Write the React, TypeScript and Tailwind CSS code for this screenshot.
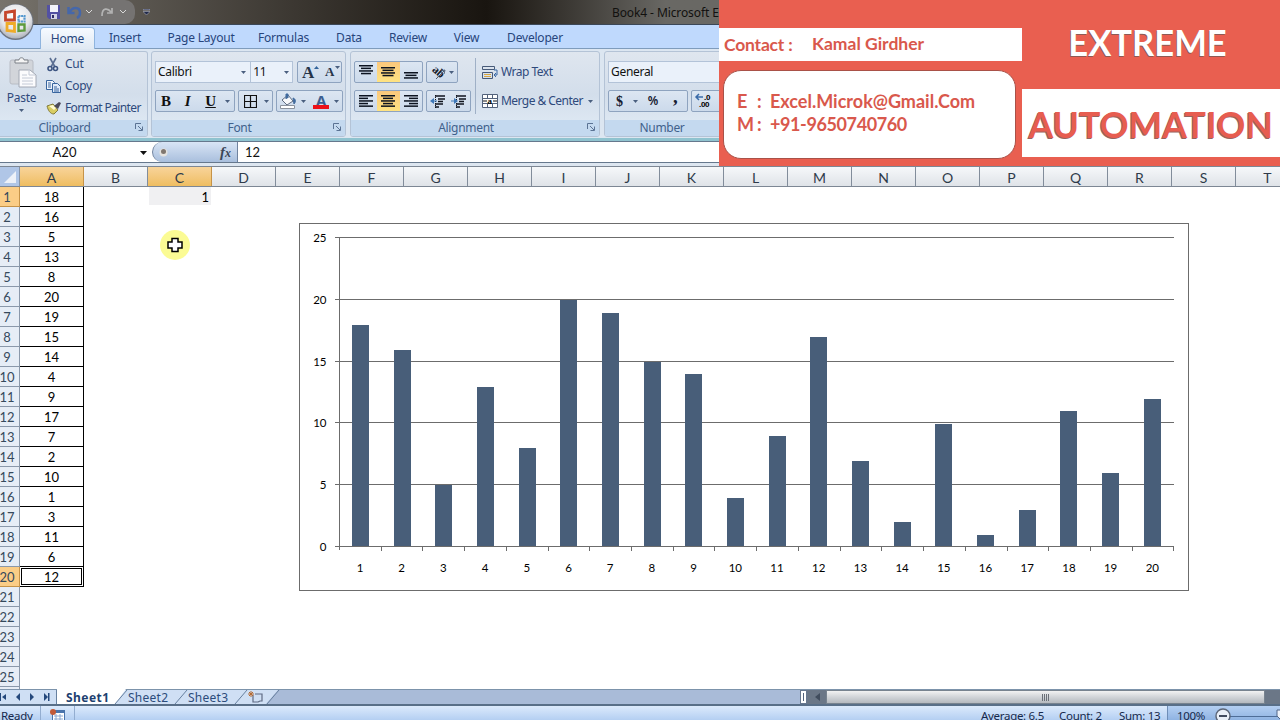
import React from "react";

const values = [18, 16, 5, 13, 8, 20, 19, 15, 14, 4, 9, 17, 7, 2, 10, 1, 3, 11, 6, 12];
const columns = "ABCDEFGHIJKLMNOPQRST".split("");

const Arrow = ({ className = "" }: { className?: string }) => (
  <svg width="5" height="3" viewBox="0 0 5 3" className={`shrink-0 ${className}`}>
    <path d="M0 0h5L2.5 3z" fill="#4a5f7f" />
  </svg>
);

const Launcher = () => (
  <svg width="8" height="8" viewBox="0 0 8 8" fill="none" stroke="#5b7394">
    <path d="M0.5 6V0.5H6M3 3l4 4M7.5 3.5v4h-4" />
  </svg>
);

const Lines = ({ widths, align = "center", className = "" }: { widths: number[]; align?: string; className?: string }) => (
  <svg width="14" height={widths.length * 2.6} className={className}>
    {widths.map((w, i) => (
      <rect
        key={i}
        x={align === "left" ? 0 : align === "right" ? 14 - w : (14 - w) / 2}
        y={i * 2.6}
        width={w}
        height="1.5"
        fill="#0c1320"
      />
    ))}
  </svg>
);

const Indent = ({ flip = false }: { flip?: boolean }) => (
  <svg width="16" height="13" viewBox="0 0 16 13">
    <path d="M5 1h10M8 4h7M8 6.500h5M5 9h8M5 12h4" stroke="#10151f" strokeWidth="1.600" />
    <path d="M5.500 0v13" stroke="#10151f" strokeDasharray="1 1" />
    <path d={flip ? "M0 5.500h3V3l4 3-4 3V6.500H0z" : "M7 5.500H4V3L0 6l4 3V6.500h3z"} fill="#3e78b8" />
  </svg>
);

const Group = ({ label, className, launcher = true, children }: { label: string; className: string; launcher?: boolean; children: React.ReactNode }) => (
  <section className={`flex shrink-0 flex-col overflow-hidden rounded-[3px] border border-[#b4c3d6] bg-linear-to-b from-[#dfe6ef] via-[#d3deeb] to-[#e2ecf6] ${className}`}>
    <div className="h-[68px] shrink-0">{children}</div>
    <div className="relative flex h-[16px] items-center justify-center bg-[#c4d9ef] pb-px pr-[18px] text-[12px] text-[#41618c]">
      {label}
      {launcher && (
        <span className="absolute right-[4px] top-[3px]">
          <Launcher />
        </span>
      )}
    </div>
  </section>
);

const box = "flex h-[22px] shrink-0 items-center rounded-[2px] border border-[#8ea3bf] bg-linear-to-b from-[#dce6f2] to-[#ccdaeb]";

const OfficeButton = () => (
  <svg width="38" height="44" viewBox="0 0 38 44" className="absolute left-[-3px] top-0">
    <defs>
      <radialGradient id="orb" cx="50%" cy="35%" r="65%">
        <stop offset="0" stopColor="#ffffff" />
        <stop offset="0.65" stopColor="#e4e5e9" />
        <stop offset="1" stopColor="#aeb2bb" />
      </radialGradient>
    </defs>
    <circle cx="18.500" cy="22" r="18" fill="#6d7480" />
    <circle cx="18.500" cy="21.500" r="17" fill="url(#orb)" />
    <g fill="none" strokeWidth="2.800">
      <path d="M8.500 20v-7.500l9-1.500v9z" stroke="#c5452b" />
      <path d="M21.500 16h6v5.500h-6z" stroke="#5598cf" strokeWidth="2.200" strokeDasharray="2 .6" />
      <path d="M10 23.500h7.500v8l-7.500-1z" stroke="#efab28" />
      <path d="M21.500 24.500h6v6l-6 .5z" stroke="#5e9b3d" strokeWidth="2.400" />
    </g>
  </svg>
);

const TitleBar = () => (
  <header className="flex h-[24px] shrink-0 items-center bg-linear-to-r from-[#77736c] from-0% via-[#191510] via-38% to-[#696864] to-52%">
    <div className="ml-[38px] flex h-full w-[97px] items-center rounded-r-[10px] bg-[#757372] pl-[9px]">
      <svg width="13" height="14" viewBox="0 0 13 14">
        <path d="M0 0h13v14H2l-2-2z" fill="#5351a3" />
        <path d="M3 0h8v7H3z" fill="#f2f3fa" />
        <path d="M4 9h6v5H4z" fill="#d3d4e5" />
        <path d="M5 10h2v3H5z" fill="#2e2c69" />
      </svg>
      <svg width="15" height="13" viewBox="0 0 15 13" className="ml-[7px]" fill="none" stroke="#4567aa" strokeWidth="2.500">
        <path d="M3 6c2-5 10-6 10 1 0 2-1 4-3 5" />
        <path d="M1.500 1v6h6" />
      </svg>
      <svg width="6" height="4" viewBox="0 0 6 4" className="ml-[4px]" fill="none" stroke="#d9d9d9"><path d="M0 0l3 3 3-3" /></svg>
      <svg width="12" height="11" viewBox="0 0 12 11" className="ml-[9px]" fill="none" stroke="#b3b3b3" strokeWidth="1.700">
        <path d="M1 9C1 0 7 1 10 5M11 1v5H6" />
      </svg>
      <svg width="6" height="4" viewBox="0 0 6 4" className="ml-[7px] shrink-0" fill="none" stroke="#d9d9d9"><path d="M0 0l3 3 3-3" /></svg>
    </div>
    <svg width="7" height="6" viewBox="0 0 7 6" className="ml-[8px]">
      <path d="M0 0h7v1H0zM0 2.500h7L3.500 6z" fill="#20294a" stroke="#c3c6d4" strokeWidth=".5" />
    </svg>
    <div className="ml-[462px] whitespace-nowrap pt-[2px] text-[12px] tracking-[-0.100px] text-[#12110f]">Book4 - Microsoft Excel</div>
  </header>
);

const Tabs = () => (
  <nav className="flex h-[25px] shrink-0 border-b border-t border-b-[#7f9cbc] border-t-[#3b4757] bg-[#bfd9fd] pl-[40px] text-[12px] tracking-[-0.200px] text-[#27457c] *:flex *:items-center *:justify-center *:pt-[2px]">
    <div className="mt-[2px] h-[23px] w-[55px] rounded-t-[4px] border border-b-0 border-[#8fb4de] bg-linear-to-b from-[#f6faff] to-[#dfe8f2] !pt-0">Home</div>
    <div className="w-[60px]">Insert</div>
    <div className="w-[92px]">Page Layout</div>
    <div className="w-[73px]">Formulas</div>
    <div className="w-[58px]">Data</div>
    <div className="w-[60px]">Review</div>
    <div className="w-[57px]">View</div>
    <div className="w-[80px]">Developer</div>
  </nav>
);

const Ribbon = () => (
  <div className="flex h-[92px] shrink-0 gap-[4px] border-b-[3px] border-[#8fc3cf] bg-[#dce6f1] pt-[2px] text-[12px] tracking-[-0.300px] text-[#2f4a7c] *:h-[86px]">
    <Group label="Clipboard" className="w-[148px] rounded-l-none border-l-0">
      <div className="flex">
        <div className="flex w-[43px] flex-col items-center pt-[5px]">
          <svg width="28" height="31" viewBox="0 0 28 31" className="ml-[2px]">
            <rect x="1" y="3" width="23" height="24" rx="2" fill="#d2d5da" stroke="#b8bcc4" />
            <path d="M6 6V3h4c0-3 5-3 5 0h4v3z" fill="#f4f4f4" stroke="#7c8188" />
            <path d="M10 13h11l6 5v12H10z" fill="#fbfbfd" stroke="#a2a8b4" />
            <path d="M20 12v6h6M13 18h5M13 21h11M13 24h11M13 27h11" fill="none" stroke="#c4cad6" />
          </svg>
          <span className="mt-[2px] leading-[15px]">Paste</span>
          <Arrow className="mt-[4px]" />
        </div>
        <div className="ml-[3px] flex flex-col pt-[1px] *:flex *:h-[22px] *:items-center">
          <div>
            <svg width="15" height="15" viewBox="0 0 15 15" fill="none" stroke="#3d5582" strokeWidth="1.600">
              <path d="M4 1l5 9M10 1L5 10" stroke="#5b6f92" />
              <circle cx="4" cy="11.500" r="2" />
              <circle cx="9.500" cy="11.500" r="2" />
            </svg>
            <span className="ml-[4px]">Cut</span>
          </div>
          <div>
            <svg width="15" height="13" viewBox="0 0 15 13" stroke="#38659e">
              <path d="M.5.500h6l2 2v7h-8z" fill="#eef4fc" />
              <path d="M6.500 3.500h5l3 3v6h-8z" fill="#dfeafa" />
              <path d="M2 3h3M2 5h3M2 7h3M8 7h3M8 9h5M8 11h5" />
            </svg>
            <span className="ml-[4px]">Copy</span>
          </div>
          <div>
            <svg width="16" height="14" viewBox="0 0 16 14">
              <path d="M1 5l6-2 5 6-4 4C4 13 2 9 1 5z" fill="#d8cc62" stroke="#827b3b" />
              <path d="M3 5l4-1 3 3-2 2z" fill="#fffbd1" />
              <path d="M8 5l5-4 2 1-3 6z" fill="#4b4a58" />
            </svg>
            <span className="ml-[3px] whitespace-nowrap tracking-[-0.620px]">Format Painter</span>
          </div>
        </div>
      </div>
    </Group>

    <Group label="Font" className="w-[195px] !-ml-px">
      <div className="flex flex-col gap-[7px] px-[3px] pt-[9px]">
        <div className="flex text-[12px] text-[#111]">
          <div className="flex h-[22px] w-[97px] items-center justify-between border border-[#b3c3d8] bg-[#eaf1fa] pl-[2px] pr-[4px]">Calibri<Arrow /></div>
          <div className="flex h-[22px] w-[42px] items-center justify-between border border-l-0 border-[#b3c3d8] bg-[#eaf1fa] pl-[2px] pr-[3px]">11<Arrow /></div>
          <div className={`${box} ml-[4px] w-[45px] font-['Liberation_Serif'] font-bold text-[#263449]`}>
            <span className="ml-[4px] text-[17px] leading-none">A</span>
            <svg width="5" height="3" viewBox="0 0 5 3" className="mb-[10px]"><path d="M0 3h5L2.500 0z" fill="#33649b" /></svg>
            <span className="ml-[6px] text-[13px]">A</span>
            <Arrow className="mb-[10px] ml-px" />
          </div>
        </div>
        <div className="flex gap-[3px] font-['Liberation_Serif'] text-[15px] text-[#111]">
          <div className={`${box} w-[80px]`}>
            <b className="ml-[5px]">B</b>
            <b className="ml-[14px] italic">I</b>
            <b className="ml-[15px] underline">U</b>
            <Arrow className="ml-[9px]" />
          </div>
          <div className={`${box} w-[35px]`}>
            <svg width="13" height="13" viewBox="0 0 13 13" className="ml-[5px]"><path d="M.5.500h12v12H.500zM6.500 0v13M0 6.500h13" fill="none" stroke="#111" strokeWidth="1.200" /></svg>
            <Arrow className="ml-[7px]" />
          </div>
          <div className={`${box} w-[67px]`}>
            <svg width="17" height="16" viewBox="0 0 17 16" className="ml-[3px]">
              <path d="M2 7l6-5 5 6-6 4z" fill="#f7f8fa" stroke="#5f6b80" />
              <path d="M6 6V1h2v4M13 5c3 1 3 4 1 6z" fill="#416b9e" stroke="#416b9e" />
              <path d="M.5 12.500h14v3H.500z" fill="#fff" stroke="#8b929d" />
            </svg>
            <Arrow className="ml-[4px]" />
            <div className="ml-[7px] flex w-[16px] flex-col items-center font-['Noto_Sans'] text-[15px] font-bold leading-[12px] text-[#3c5f91]">
              A
              <span className="mt-[-1px] h-[4px] w-[16px] bg-[#ed1018]" />
            </div>
            <Arrow className="ml-[5px]" />
          </div>
        </div>
      </div>
    </Group>

    <Group label="Alignment" className="w-[250px]">
      <div className="flex pl-[3px]">
        <div className="flex flex-col gap-[7px] pt-[9px]">
          <div className="flex gap-[3px]">
            <div className={`${box} w-[69px] *:flex *:h-full *:w-[23px] *:justify-center`}>
              <div className="pt-[3px]"><Lines widths={[14, 10, 14, 10]} /></div>
              <div className="items-center bg-linear-to-b from-[#fbc77c] to-[#fee382]"><Lines widths={[14, 11, 14, 11]} /></div>
              <div className="items-end pb-[2px]"><Lines widths={[14, 11, 14]} /></div>
            </div>
            <div className={`${box} w-[32px] pl-[4px]`}>
              <svg width="16" height="16" viewBox="0 0 16 16" className="overflow-visible">
                <text x="0" y="10" transform="rotate(42 5 9)" fontFamily="Liberation Serif" fontWeight="bold" fontSize="12" fill="#17202e">ab</text>
                <path d="M5 15l8-8M14 6l-4 1M14 6l-1 4" stroke="#4e5d74" fill="none" />
              </svg>
              <Arrow className="ml-[2px]" />
            </div>
          </div>
          <div className="flex gap-[3px]">
            <div className={`${box} w-[69px] *:flex *:h-full *:w-[23px] *:items-center *:justify-center`}>
              <div><Lines widths={[14, 9, 14, 9, 14]} align="left" /></div>
              <div className="bg-linear-to-b from-[#fbc77c] to-[#fee382]"><Lines widths={[14, 10, 14, 10, 14]} /></div>
              <div><Lines widths={[14, 9, 14, 9, 14]} align="right" /></div>
            </div>
            <div className={`${box} w-[45px] justify-between px-[3px]`}>
              <Indent />
              <Indent flip />
            </div>
          </div>
        </div>
        <div className="ml-[4px] mt-[6px] h-[56px] w-px bg-[#9fb0c6]" />
        <div className="ml-[6px] flex flex-col gap-[7px] pt-[9px] *:flex *:h-[22px] *:items-center">
          <div>
            <svg width="17" height="15" viewBox="0 0 17 15" fill="none" stroke="#475a78">
              <path d="M.500 1.500h12v3H.500zM.500 7.500h10v6H.500z" />
              <path d="M2 9.500h7M2 11.500h7" stroke="#d8a640" />
              <path d="M12 5h3v5h-3m0 0l2-2m-2 2l2 2" stroke="#3968a5" />
            </svg>
            <span className="ml-[2px] whitespace-nowrap tracking-[-0.500px]">Wrap Text</span>
          </div>
          <div>
            <svg width="16" height="14" viewBox="0 0 16 14">
              <path d="M.5.500h15v13H.500zM0 4.500h16M0 9.500h16M5.500 0v4M10.500 0v4M5.500 10v4M10.500 10v4" fill="#fff" stroke="#53627b" />
              <path d="M1 7h4M11 7h4" stroke="#111" />
              <text x="5.500" y="9.500" fontSize="9" fontWeight="bold" fontFamily="Liberation Serif">a</text>
            </svg>
            <span className="ml-[3px] w-[83px] whitespace-nowrap tracking-[-0.550px]">Merge &amp; Center</span>
            <Arrow className="ml-[4px]" />
          </div>
        </div>
      </div>
    </Group>

    <Group label="Number" className="w-[134px]" launcher={false}>
      <div className="flex flex-col gap-[7px] pl-[3px] pt-[9px]">
        <div className="flex h-[22px] w-[125px] items-center border border-[#b3c3d8] bg-[#eaf1fa] pl-[2px] text-[#111]">General</div>
        <div className="flex gap-[3px] text-[#162031]">
          <div className={`${box} w-[80px]`}>
            <b className="ml-[7px] font-['Liberation_Serif'] text-[14px]">$</b>
            <Arrow className="ml-[10px]" />
            <span className="ml-[10px] font-semibold">%</span>
            <b className="mb-[8px] ml-[15px] font-['Liberation_Serif'] text-[19px]">,</b>
          </div>
          <div className={`${box} w-[40px] pl-[3px]`}>
            <svg width="18" height="14" viewBox="0 0 18 14" className="overflow-visible">
              <path d="M8 3H1m3-3L1 3l3 3" fill="none" stroke="#3b6ca9" strokeWidth="1.500" />
              <text x="9" y="6" fontSize="8" fontWeight="bold" fontFamily="Liberation Sans">.0</text>
              <text x="4" y="13" fontSize="8" fontWeight="bold" fontFamily="Liberation Sans">.00</text>
            </svg>
          </div>
        </div>
      </div>
    </Group>
  </div>
);

const FormulaBar = () => (
  <div className="flex h-[25px] shrink-0 flex-col bg-[#dde6f0]">
    <div className="flex h-[22px] shrink-0 items-stretch border-b border-t border-[#66788d] bg-white font-[Lato] text-[13px] text-[#111]">
      <div className="flex w-[152px] items-center pt-[2px]">
        <span className="w-[129px] text-center">A20</span>
        <svg width="7" height="4" viewBox="0 0 7 4" className="ml-[11px]"><path d="M0 0h7L3.500 4z" fill="#111" /></svg>
      </div>
      <div className="flex w-[86px] items-center justify-between rounded-l-full border-l border-r border-[#6f829e] bg-linear-to-b from-[#d9e5f5] to-[#a9bfdd] pl-[6px] pr-[6px]">
        <svg width="9" height="9" viewBox="0 0 9 9">
          <circle cx="4.500" cy="4.500" r="4" fill="#e5e3df" />
          <circle cx="4.500" cy="3.500" r="2.500" fill="#80776f" />
        </svg>
        <span className="font-['Liberation_Serif'] text-[15px] font-bold italic text-[#3c4656]">f<span className="text-[12px]">x</span></span>
      </div>
      <span className="flex items-center pl-[7px] pt-[2px]">12</span>
    </div>
  </div>
);

const Chart = () => (
  <svg width="890" height="368" viewBox="299 223 890 368" className="absolute left-[299px] top-[57px] font-[Lato] text-[11.5px]">
    <rect x="299.500" y="223.500" width="889" height="367" fill="#fff" stroke="#6c6c6c" />
    {[0, 5, 10, 15, 20, 25].map((n) => (
      <g key={n}>
        <path d={`M335 ${Math.round(546 - n * 12.36) + 0.5}H1174`} stroke="#6c6c6c" />
        <text x="326.500" y={Math.round(546 - n * 12.36) + 5} textAnchor="end">{n}</text>
      </g>
    ))}
    <path d="M339.500 237V550" stroke="#6c6c6c" />
    {values.map((v, i) => (
      <g key={i}>
        <rect x={Math.round(352 + i * 41.66)} y={Math.round(547 - v * 12.33)} width="17" height={Math.round(v * 12.33)} fill="#485e79" />
        <path d={`M${Math.round(339 + (i + 1) * 41.72) + 0.5} 547v4`} stroke="#6c6c6c" />
        <text x={360 + i * 41.7} y="572" textAnchor="middle">{i + 1}</text>
      </g>
    ))}
    <path d="M335 546.500H1174" stroke="#6c6c6c" />
  </svg>
);

const Sheet = () => (
  <main className="relative h-[523px] shrink-0 overflow-hidden bg-white font-[Lato] text-[13px]">
    <div className="flex h-[21px] border-b border-t border-[#7d8794] text-[14px] text-[#2f3b4a]">
      <div className="flex w-[20px] shrink-0 items-end justify-end border-r border-[#8894a5] bg-[#b0c6e7] pb-[3px] pr-[3px]">
        <svg width="12" height="12" viewBox="0 0 12 12"><path d="M12 0v12H0z" fill="#edf1f8" /></svg>
      </div>
      {columns.map((c) => (
        <div
          key={c}
          className={`flex w-[64px] shrink-0 items-center justify-center border-r pt-px ${
            c === "A" || c === "C" ? "border-[#c69348] bg-linear-to-b from-[#f8d49a] to-[#efbd60]" : "border-[#828d9b] bg-linear-to-b from-[#f6f8fa] to-[#dfe3e8]"
          }`}
        >
          {c}
        </div>
      ))}
    </div>
    {Array.from({ length: 25 }, (_, i) => (
      <div key={i} className="flex h-[20px]">
        <div className={`flex w-[20px] items-center border-b border-r pt-[2px] text-[#35495c] ${i === 0 || i === 19 ? "border-[#c69348] bg-[#fbcd86]" : "border-[#8a98aa] bg-[#e6edf6]"}`}>
          <span className="flex w-[14px] justify-center">{i + 1}</span>
        </div>
        {i < 20 && (
          <div className="relative flex w-[64px] items-center justify-center border-b border-r border-black pt-[2px]">
            {values[i]}
            {i === 19 && <div className="absolute inset-[1px] border border-black" />}
          </div>
        )}
        {i === 0 && <div className="ml-[65px] flex h-[18px] w-[62px] items-center justify-end bg-[#f0f0f2] pr-[2px] pt-[4px]">1</div>}
      </div>
    ))}
    <div className="h-[2px] w-[20px] border-r border-[#8a98aa] bg-[#e6edf6]" />
    <Chart />
    <svg width="32" height="32" viewBox="0 0 32 32" className="absolute left-[159px] top-[63px]">
      <circle cx="16" cy="16" r="15" fill="#fbfb94" />
      <path d="M13 9.500h6v3.500h4v6h-4v3.500h-6V19H9v-6h4z" fill="#fff" stroke="#000" strokeWidth="1.500" />
    </svg>
  </main>
);

const SheetTabs = () => (
  <div className="flex h-[17px] shrink-0 border-b-2 border-t border-b-[#596f88] border-t-[#7c93ab] bg-[#a9bbd8] text-[12px] text-[#2c4b7b]">
    <svg width="278" height="14" viewBox="0 0 278 14" className="shrink-0 overflow-visible">
      <path d="M0 0H278L266 14H0z" fill="#cfdff4" />
      <path d="M57 -1H126L115 14H57z" fill="#fff" />
      <path d="M127 0L115 14M187 0L175 14M247 0L235 14M279 0L267 14M56.500 0v14" stroke="#67809f" fill="none" />
      <path d="M2 7l4-3v6zM16 7l4-4v8zM30 3l4 4-4 4zM44 3l4 4-4 4zM48 3h1.500v8H48zM0 3h1v8H0z" fill="#24487c" />
      <text x="66" y="12" fontWeight="bold" fontSize="12" textLength="43" fill="#1d3f70">Sheet1</text>
      <text x="128" y="12" fontSize="12" textLength="40" fill="#2c4b7b">Sheet2</text>
      <text x="188" y="12" fontSize="12" textLength="40" fill="#2c4b7b">Sheet3</text>
      <path d="M253 5v7h6M255 4h7v7h-2l-2 1" fill="none" stroke="#5f6b83" strokeWidth="1.200" />
      <path d="M251 1v6M248 4h6M249 2l4 4M253 2l-4 4" stroke="#b46a32" />
    </svg>
    <div className="w-[522px]" />
    <div className="flex h-full w-[7px] items-center justify-center border border-[#68788f] bg-white"><span className="h-[8px] w-px bg-[#53637b]" /></div>
    <div className="flex h-full w-[19px] items-center justify-center bg-[#6b7787]">
      <svg width="6" height="8" viewBox="0 0 6 8"><path d="M6 0v8L1 4z" fill="#414d5e" /></svg>
    </div>
    <div className="flex h-full w-[439px] items-center justify-center gap-[1px] border border-[#78838f] bg-linear-to-b from-[#f2f2f2] via-[#d1d4d8] to-[#b5b9bf]">
      {[0, 1, 2, 3].map((n) => (
        <span key={n} className="h-[7px] w-px bg-[#6a7078]" />
      ))}
    </div>
    <div className="h-full w-[15px] bg-[#6b7787]" />
  </div>
);

const StatusBar = () => (
  <footer className="flex h-[14px] shrink-0 bg-linear-to-b from-[#dceafc] to-[#b4cff2] text-[11.5px] leading-[20px] tracking-[-0.300px] text-[#16294c]">
    <span className="w-[40px] pl-[1px]">Ready</span>
    <div className="flex w-[35px] justify-center border-x border-[#93add0]">
      <svg width="15" height="14" viewBox="0 0 15 14" className="mt-[3px]">
        <path d="M2.500 1.500h12v13h-12z" fill="#fff" stroke="#4a74ac" />
        <path d="M5 1h10v3H5z" fill="#4a74ac" />
        <path d="M4 7h9M4 10h9M6 5v9M10 5v9" stroke="#8aa8d2" />
        <circle cx="3" cy="3" r="3" fill="#c25a38" />
      </svg>
    </div>
    <div className="ml-[906px] flex w-[187px] whitespace-nowrap border-r border-[#6e8db7]">
      <span className="w-[78px]">Average: 6.5</span>
      <span className="w-[60px]">Count: 2</span>
      <span>Sum: 13</span>
    </div>
    <div className="flex w-[112px] bg-linear-to-b from-[#b4cff2] to-[#8fb3e2] pl-[9px]">
      <span>100%</span>
      <svg width="66" height="14" viewBox="0 0 66 14" className="ml-auto shrink-0">
        <path d="M16 10.500h50" stroke="#4e6d98" />
        <circle cx="9" cy="10" r="7" fill="#e9eff8" stroke="#5b6577" strokeWidth="1.400" />
        <path d="M5 10h8" stroke="#414b5f" strokeWidth="2" />
        <path d="M63 4h6v10h-2l-4-4z" fill="#eef3fa" stroke="#516789" />
      </svg>
    </div>
  </footer>
);

const Banner = () => (
  <aside className="absolute left-[719px] top-0 flex h-[166px] w-[561px] bg-[#e95f50] font-[Lato] font-bold text-[#d9584c]">
    <div className="flex w-[303px] flex-col pt-[28px]">
      <div className="flex h-[33px] items-center bg-white pl-[5px] text-[17.5px]">
        <span className="w-[88px] pt-[2px] tracking-[-0.200px]">Contact :</span>
        <span>Kamal Girdher</span>
      </div>
      <div className="ml-[4px] mt-[9px] flex h-[89px] w-[293px] flex-col rounded-[18px] border border-[#a95148] bg-white pl-[13px] pt-[19px] text-[18px] leading-[23px]">
        <div className="flex"><span className="w-[20px]">E</span><span className="w-[13px]">:</span>Excel.Microk@Gmail.Com</div>
        <div className="flex"><span className="w-[20px]">M</span><span className="w-[13px]">:</span><span className="tracking-[-0.400px]">+91-9650740760</span></div>
      </div>
    </div>
    <div className="flex w-[258px] flex-col">
      <div className="flex h-[89px] items-center justify-center pb-[5px] pr-[6px] text-[36px] text-white [text-shadow:-1px_1px_0_#8d5a54]">
        <span className="scale-x-[0.96]">EXTREME</span>
      </div>
      <div className="flex h-[68px] items-center justify-center bg-white pt-[2px] text-[37px] text-[#e75d50] [text-shadow:-1px_1px_0_#95645f]">
        <span className="scale-x-[0.965]">AUTOMATION</span>
      </div>
    </div>
  </aside>
);

export default function App() {
  return (
    <div className="relative flex h-[720px] w-[1280px] flex-col overflow-hidden bg-white font-['Noto_Sans',sans-serif]">
      <TitleBar />
      <Tabs />
      <Ribbon />
      <FormulaBar />
      <Sheet />
      <SheetTabs />
      <StatusBar />
      <OfficeButton />
      <Banner />
    </div>
  );
}
